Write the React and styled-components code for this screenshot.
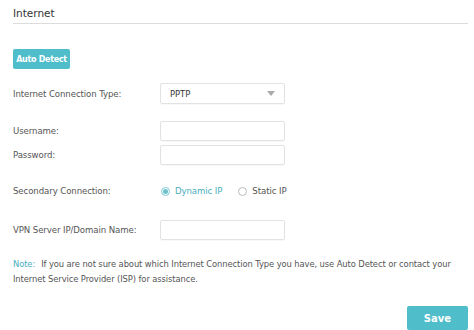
import React from 'react';
import styled, { createGlobalStyle } from 'styled-components';

const GlobalStyle = createGlobalStyle`
  html, body {
    margin: 0;
    padding: 0;
    background: #fff;
  }
  body {
    font-family: "DejaVu Sans", Verdana, sans-serif;
    color: #555;
  }
`;

const teal = '#4fbdca';

const Page = styled.div`
  width: 474px;
  height: 330px;
  box-sizing: border-box;
  padding: 0 6px 0 13px;
  display: flex;
  flex-direction: column;
`;

const Title = styled.div`
  font-size: 10.5px;
  color: #333;
  padding-top: 7px;
  height: 16px;
  border-bottom: 1px solid #dcdcdc;
`;

const Button = styled.button`
  align-self: ${props => (props.right ? 'flex-end' : 'flex-start')};
  height: ${props => props.h}px;
  width: ${props => props.w}px;
  margin-top: ${props => props.top}px;
  padding: 0;
  border: none;
  border-radius: 2px;
  background: ${teal};
  color: #fff;
  font-family: inherit;
  font-weight: ${props => (props.right ? 'bold' : 600)};
  font-size: ${props => props.size}px;
  letter-spacing: ${props => (props.right ? 0 : -0.3)}px;
  white-space: nowrap;
`;

const Row = styled.div`
  display: flex;
  align-items: center;
  margin-top: ${props => props.top}px;
  height: ${props => props.h || 20}px;
`;

const Label = styled.div`
  width: 147px;
  font-size: 8.6px;
  letter-spacing: -0.1px;
`;

const Field = styled.div`
  width: 125px;
  height: ${props => props.h || 20}px;
  box-sizing: border-box;
  border: 1px solid #e2e2e2;
  border-radius: 2px;
  box-shadow: 0 1px 1px rgba(0, 0, 0, 0.03);
  display: flex;
  align-items: center;
  justify-content: space-between;
  padding: 0 9px 0 9px;
  font-size: 8.4px;
  color: #333;
`;

const Caret = styled.span`
  width: 0;
  height: 0;
  border-left: 4px solid transparent;
  border-right: 4px solid transparent;
  border-top: 5px solid #aaa;
`;

const Radios = styled.div`
  display: flex;
  align-items: center;
  gap: 16px;
  padding-left: 1px;
`;

const RadioItem = styled.div`
  display: flex;
  align-items: center;
  gap: 5px;
  font-size: 8.6px;
  letter-spacing: -0.1px;
  color: ${props => (props.checked ? '#4aaebd' : '#555')};
`;

const Dot = styled.span`
  width: 7px;
  height: 7px;
  border-radius: 50%;
  border: 1px solid ${props => (props.checked ? '#7cc9d2' : '#bbb')};
  display: flex;
  align-items: center;
  justify-content: center;
  &::after {
    content: '';
    width: 5px;
    height: 5px;
    border-radius: 50%;
    background: ${props => (props.checked ? '#6cc0ca' : 'transparent')};
  }
`;

const Note = styled.div`
  margin-top: 17px;
  font-size: 8.4px;
  line-height: 15px;
  letter-spacing: -0.1px;
  padding-right: 6px;
`;

const NoteLabel = styled.span`
  color: #4aaebd;
  margin-right: 6px;
`;

export default function App() {
  return (
    <>
      <GlobalStyle />
      <Page>
        <Title>Internet</Title>
        <Button top={25} h={20} w={57} size={8}>Auto Detect</Button>
        <Row top={14} h={21}>
          <Label>Internet Connection Type:</Label>
          <Field h={21}>
            PPTP
            <Caret />
          </Field>
        </Row>
        <Row top={17}>
          <Label>Username:</Label>
          <Field />
        </Row>
        <Row top={4}>
          <Label>Password:</Label>
          <Field />
        </Row>
        <Row top={16}>
          <Label>Secondary Connection:</Label>
          <Radios>
            <RadioItem checked>
              <Dot checked />
              Dynamic IP
            </RadioItem>
            <RadioItem>
              <Dot />
              Static IP
            </RadioItem>
          </Radios>
        </Row>
        <Row top={19}>
          <Label>VPN Server IP/Domain Name:</Label>
          <Field />
        </Row>
        <Note>
          <NoteLabel>Note:</NoteLabel>If you are not sure about which Internet Connection Type you have, use Auto Detect or contact your Internet Service Provider (ISP) for assistance.
        </Note>
        <Button right top={19} h={24} w={61} size={10}>Save</Button>
      </Page>
    </>
  );
}
